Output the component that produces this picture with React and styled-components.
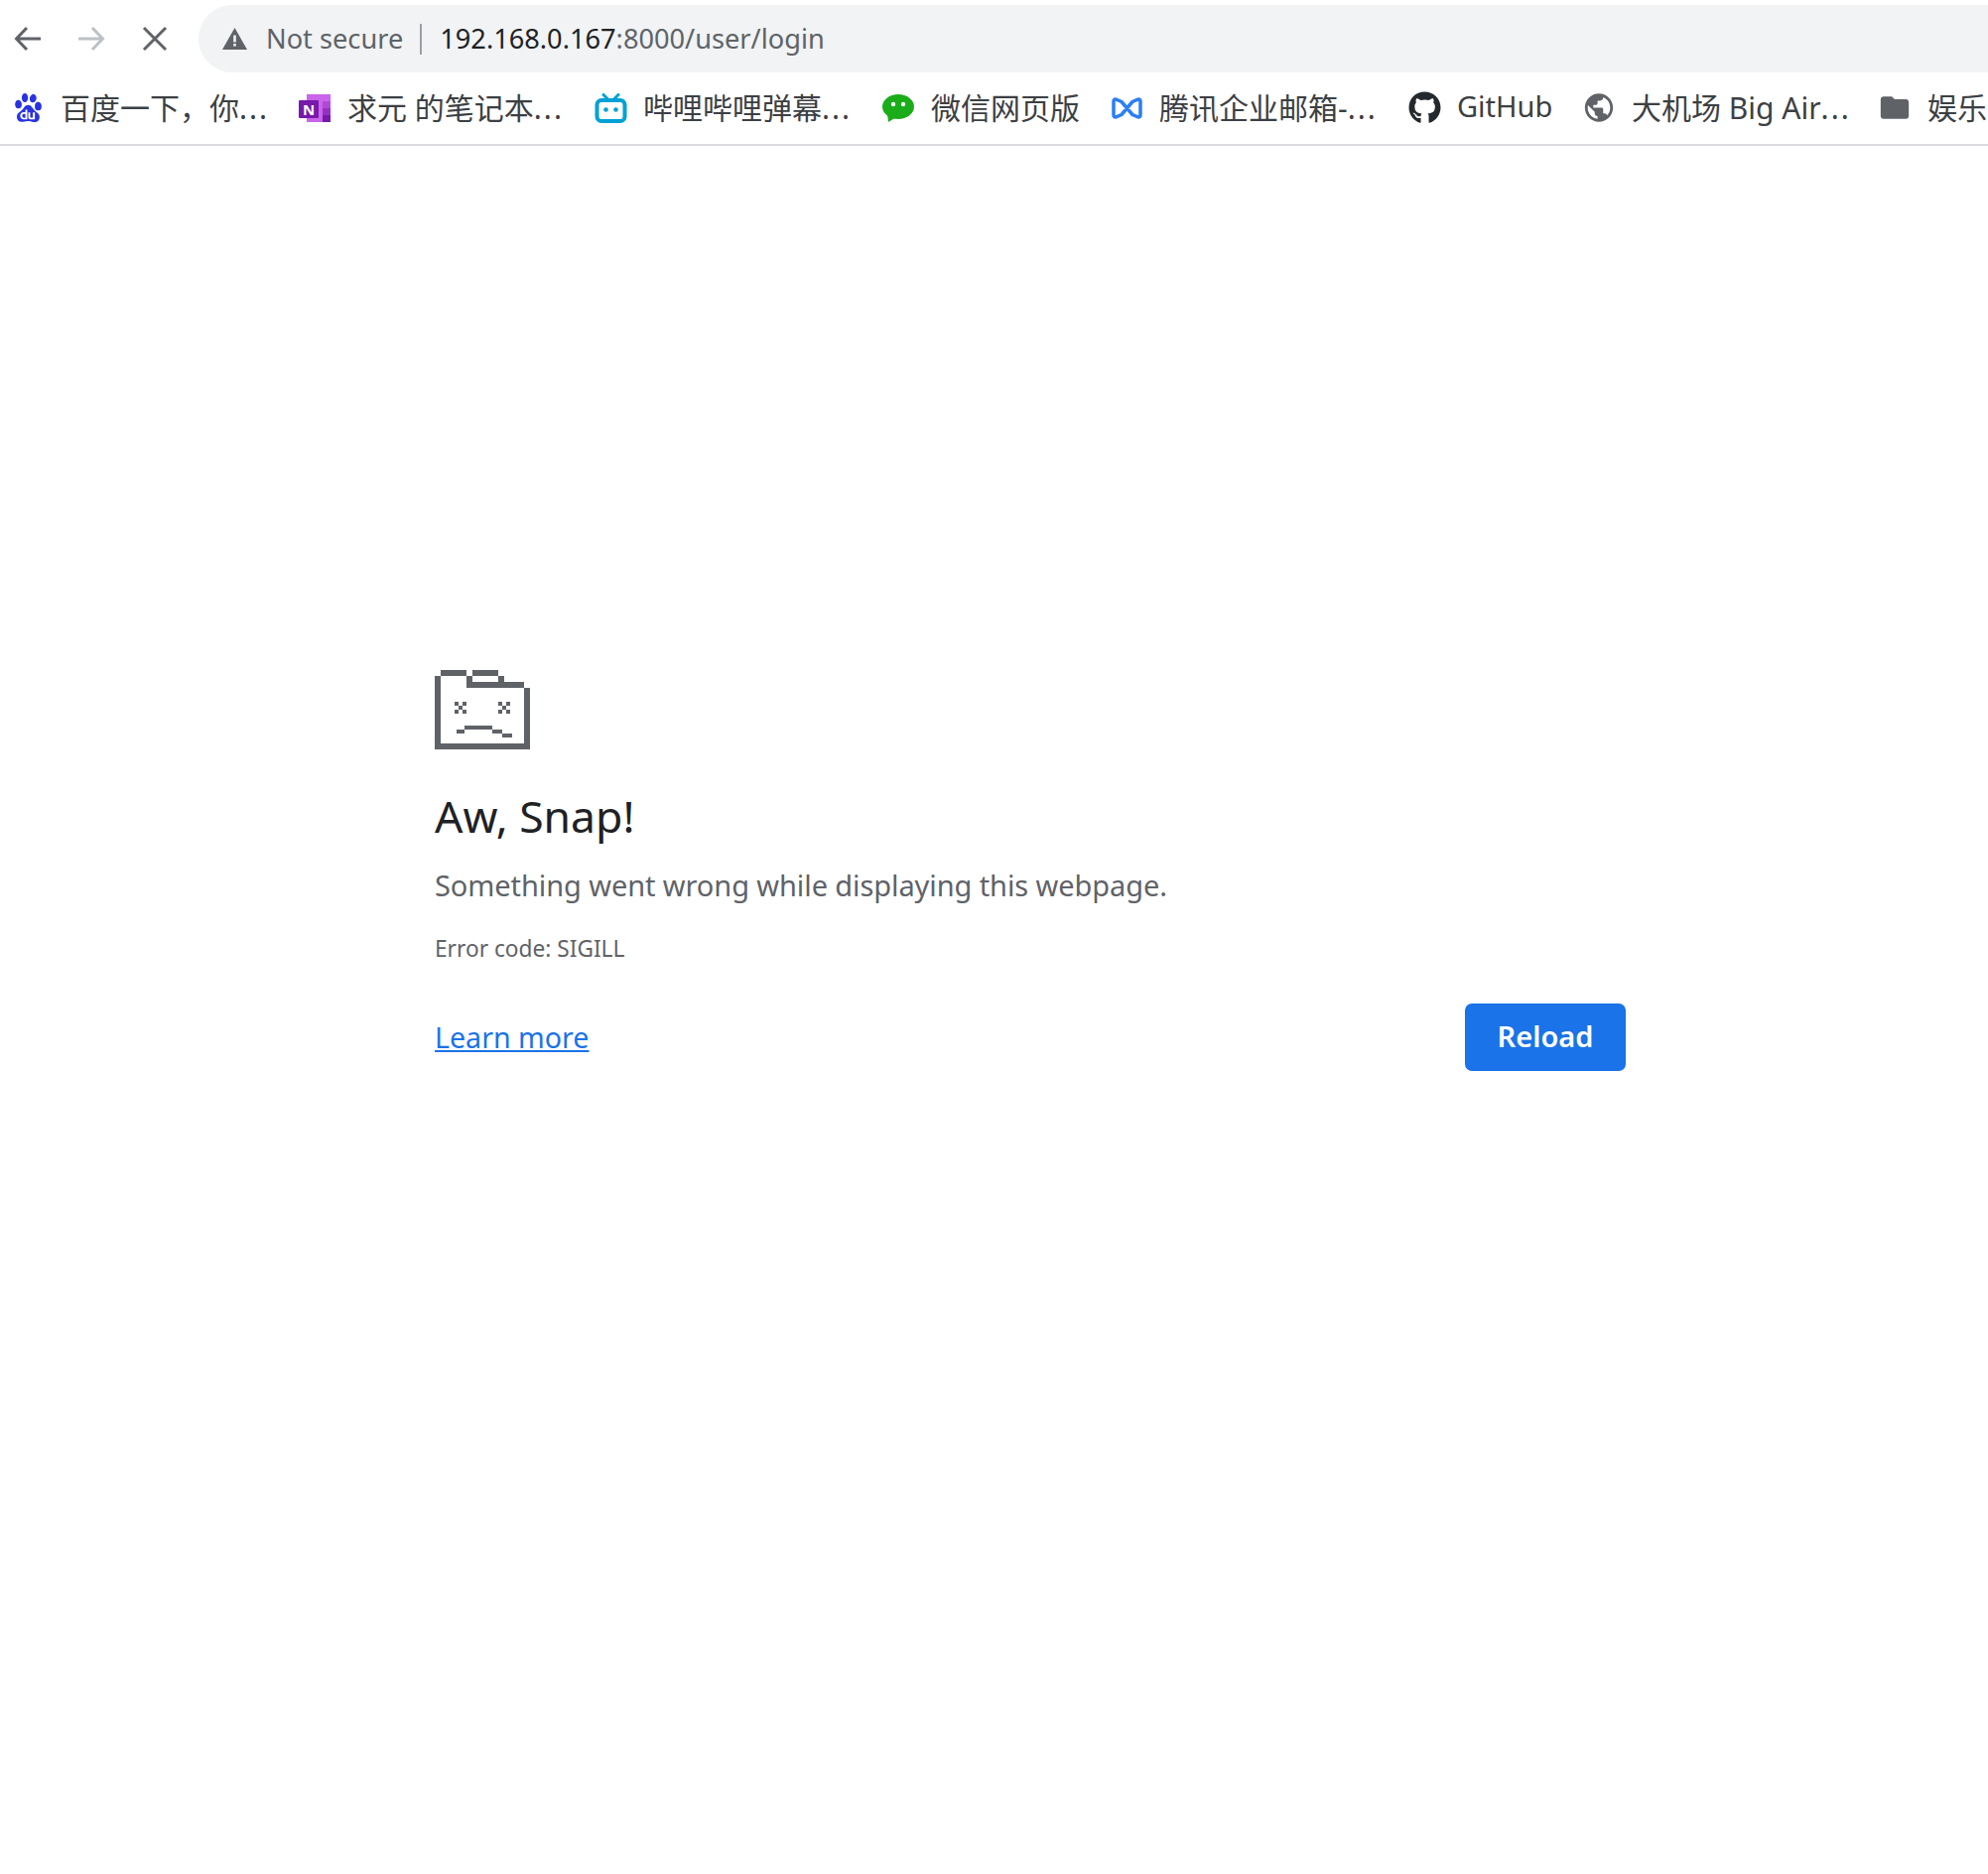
import React from "react";
import styled, { createGlobalStyle } from "styled-components";
import { FaGithub } from "react-icons/fa";
import { MdPublic, MdFolder } from "react-icons/md";
import { SiBaidu } from "react-icons/si";

const sans = `"Noto Sans", "Noto Sans CJK SC", sans-serif`;

const GlobalStyle = createGlobalStyle`
  html, body {
    margin: 0;
    background: #fff;
    font-family: ${sans};
  }
`;

const OneNoteIcon = () => (
  <svg width="32" height="28" viewBox="0 0 32 28">
    <rect x="8" y="0" width="24" height="28" fill="#ca64ea" />
    <rect x="24" y="7" width="8" height="7" fill="#ae4bd5" />
    <rect x="24" y="14" width="8" height="7" fill="#9332bf" />
    <rect x="24" y="21" width="8" height="7" fill="#7719aa" />
    <rect x="0" y="6" width="20" height="18" rx="1" fill="#7719aa" />
    <text x="10" y="20.5" textAnchor="middle" fontSize="15" fontWeight="700" fill="#fff" fontFamily="Noto Sans">N</text>
  </svg>
);

const BiliIcon = () => (
  <svg width="33" height="30" viewBox="0 0 33 30">
    <path d="M9 1.500l5 5M24 1.500l-5 5" stroke="#00a1d6" strokeWidth="3" strokeLinecap="round" />
    <rect x="2.500" y="7" width="28" height="21" rx="4.5" fill="none" stroke="#00a1d6" strokeWidth="4" />
    <circle cx="11.500" cy="16.500" r="2.300" fill="#00a1d6" />
    <circle cx="21.500" cy="16.500" r="2.300" fill="#00a1d6" />
  </svg>
);

const WeChatIcon = () => (
  <svg width="32" height="28" viewBox="0 0 32 28">
    <ellipse cx="16" cy="12.500" rx="16" ry="12.500" fill="#1aad19" />
    <path d="M5 19l1 9 8-5z" fill="#1aad19" />
    <circle cx="11" cy="10" r="2.2" fill="#fff" />
    <circle cx="21" cy="10" r="2.2" fill="#fff" />
  </svg>
);

const TencentMailIcon = () => (
  <svg width="31" height="22" viewBox="0 0 31 22">
    <path
      d="M10 4.500L4.500 2.200Q2 1.500 2 4v14q0 2.500 2.500 1.800L10 17.500M21 4.500l5.500-2.300Q29 1.500 29 4v14q0 2.500-2.500 1.800L21 17.500M10 4.500l11 13M21 4.500l-11 13"
      fill="none"
      stroke="#2b7ff5"
      strokeWidth="3.5"
      strokeLinejoin="round"
      strokeLinecap="round"
    />
  </svg>
);

const bookmarks = [
  { label: "百度一下，你", cut: true, width: 289, icon: <SiBaidu size={29} color="#2932e1" /> },
  { label: "求元 的笔记本", cut: true, width: 298, icon: <OneNoteIcon /> },
  { label: "哔哩哔哩弹幕", cut: true, width: 290, icon: <BiliIcon /> },
  { label: "微信网页版", width: 230, icon: <WeChatIcon /> },
  { label: "腾讯企业邮箱-", cut: true, width: 300, icon: <TencentMailIcon /> },
  { label: "GitHub", small: true, width: 176, icon: <FaGithub size={33} color="#24292e" /> },
  { label: "大机场 Big Air", cut: true, width: 298, icon: <MdPublic size={35} color="#5f6368" /> },
  { label: "娱乐", width: 107, icon: <MdFolder size={35} color="#5f6368" /> },
];

const eyeCells = [
  [0, 0],
  [24, 0],
  [12, 12],
  [0, 24],
  [24, 24],
];

// drawn on a 3x grid, same as the crop of the icon
const SadFolder = () => (
  <svg width="140" height="110" viewBox="0 0 420 330" fill="#5f6368" shapeRendering="crispEdges">
    <rect x="72" y="45" width="78" height="18" />
    <rect x="168" y="45" width="78" height="18" />
    <rect x="54" y="63" width="18" height="222" />
    <rect x="54" y="267" width="288" height="18" />
    <rect x="324" y="99" width="18" height="186" />
    <rect x="150" y="63" width="18" height="36" />
    <rect x="246" y="63" width="18" height="18" />
    <rect x="150" y="81" width="174" height="18" />
    {eyeCells.map(([x, y]) => (
      <rect key={`l${x}${y}`} x={114 + x} y={141 + y} width="12" height="12" />
    ))}
    {eyeCells.map(([x, y]) => (
      <rect key={`r${x}${y}`} x={246 + x} y={141 + y} width="12" height="12" />
    ))}
    <rect x="120" y="225" width="24" height="12" />
    <rect x="144" y="213" width="84" height="12" />
    <rect x="228" y="225" width="30" height="12" />
    <rect x="258" y="237" width="30" height="12" />
  </svg>
);

const App = () => {
  return (
    <Page>
      <GlobalStyle />
      <Toolbar>
        <NavButton>
          <svg width="28" height="26" viewBox="0 0 28 26" fill="none" stroke="#5f6368" strokeWidth="3">
            <path d="M27 13H3M13 2L2.500 13 13 24" />
          </svg>
        </NavButton>
        <NavButton>
          <svg width="28" height="26" viewBox="0 0 28 26" fill="none" stroke="#bdc1c6" strokeWidth="3">
            <path d="M1 13h24M15 2l10.500 11L15 24" />
          </svg>
        </NavButton>
        <NavButton>
          <svg width="26" height="26" viewBox="0 0 26 26" fill="none" stroke="#5f6368" strokeWidth="3">
            <path d="M2 2l22 22M24 2L2 24" />
          </svg>
        </NavButton>
        <Omnibox>
          <svg width="25" height="22" viewBox="0 0 25 22">
            <path d="M12.500 0L25 22H0z" fill="#5f6368" />
            <rect x="11.200" y="7.500" width="2.600" height="7" fill="#f1f3f4" />
            <rect x="11.200" y="16" width="2.600" height="2.600" fill="#f1f3f4" />
          </svg>
          <SecurityLabel>Not secure</SecurityLabel>
          <Divider />
          <Url>
            192.168.0.167<UrlRest>:8000/user/login</UrlRest>
          </Url>
        </Omnibox>
      </Toolbar>
      <BookmarkBar>
        {bookmarks.map((item) => (
          <Bookmark key={item.label} $width={item.width}>
            <BookmarkIcon>{item.icon}</BookmarkIcon>
            <BookmarkLabel $small={item.small}>
              {item.label}
              {item.cut && <Dots>...</Dots>}
            </BookmarkLabel>
          </Bookmark>
        ))}
      </BookmarkBar>
      <Main>
        <Content>
          <IconSlot>
            <SadFolder />
          </IconSlot>
          <Heading>Aw, Snap!</Heading>
          <Message>Something went wrong while displaying this webpage.</Message>
          <ErrorCode>Error code: SIGILL</ErrorCode>
          <Actions>
            <LearnMore href="#">Learn more</LearnMore>
            <Reload>Reload</Reload>
          </Actions>
        </Content>
      </Main>
    </Page>
  );
};

const Page = styled.div`
  width: 2003px;
  height: 1888px;
  overflow: hidden;
  background: #fff;
`;

const Toolbar = styled.div`
  display: flex;
  gap: 8px;
  height: 68px;
  padding-top: 5px;
`;

const NavButton = styled.div`
  display: flex;
  flex: none;
  align-items: center;
  justify-content: center;
  width: 56px;
`;

const Omnibox = styled.div`
  display: flex;
  flex: 1;
  align-items: center;
  margin-left: 8px;
  padding-left: 24px;
  border-radius: 34px 0 0 34px;
  background: #f1f3f4;
`;

const SecurityLabel = styled.span`
  margin-left: 19px;
  margin-top: -1px;
  color: #5f6368;
  font-size: 27.2px;
`;

const Divider = styled.span`
  width: 2px;
  height: 31px;
  margin: 0 18px 0 17px;
  background: #9aa0a6;
`;

const Url = styled.span`
  margin-top: -1px;
  color: #202124;
  font-size: 27.2px;
`;

const UrlRest = styled.span`
  color: #5f6368;
`;

const BookmarkBar = styled.div`
  display: flex;
  align-items: center;
  height: 72px;
  padding-left: 11px;
  overflow: hidden;
  border-bottom: 2px solid #dadce0;
`;

const Bookmark = styled.div`
  display: flex;
  flex: none;
  align-items: center;
  gap: 16px;
  width: ${(props) => props.$width}px;
  white-space: nowrap;
`;

const BookmarkIcon = styled.span`
  display: flex;
  flex: none;
  align-items: center;
  justify-content: center;
  width: 34px;
  margin-top: -1px;
`;

const BookmarkLabel = styled.span`
  margin-top: -5px;
  color: #3c4043;
  font-size: ${(props) => (props.$small ? "29px" : "30px")};
`;

const Dots = styled.span`
  letter-spacing: 2px;
`;

const Main = styled.main`
  padding-top: 528px;
  padding-left: 438px;
`;

const Content = styled.div`
  width: 1200px;
`;

const IconSlot = styled.div`
  display: flex;
  height: 95px;
  margin-left: -18px;
  margin-top: -15px;
`;

const Heading = styled.h1`
  margin: 37px 0 0;
  color: #202124;
  font-size: 44.5px;
  font-weight: 400;
  line-height: 60px;
`;

const Message = styled.p`
  margin: 20px 0 0;
  color: #5f6368;
  font-size: 29px;
  letter-spacing: -0.09px;
  line-height: 40px;
`;

const ErrorCode = styled.div`
  margin-top: 27px;
  color: #5f6368;
  font-size: 22.7px;
  line-height: 34px;
`;

const Actions = styled.div`
  display: flex;
  align-items: center;
  justify-content: space-between;
  margin-top: 38px;
`;

const LearnMore = styled.a`
  margin-bottom: 2px;
  color: #1a73e8;
  font-size: 28.6px;
`;

const Reload = styled.button`
  width: 162px;
  height: 68px;
  padding: 0 0 3px;
  border: 0;
  border-radius: 7px;
  background: #1a73e8;
  color: #fff;
  font-family: ${sans};
  font-size: 29px;
  font-weight: 600;
`;

export default App;
